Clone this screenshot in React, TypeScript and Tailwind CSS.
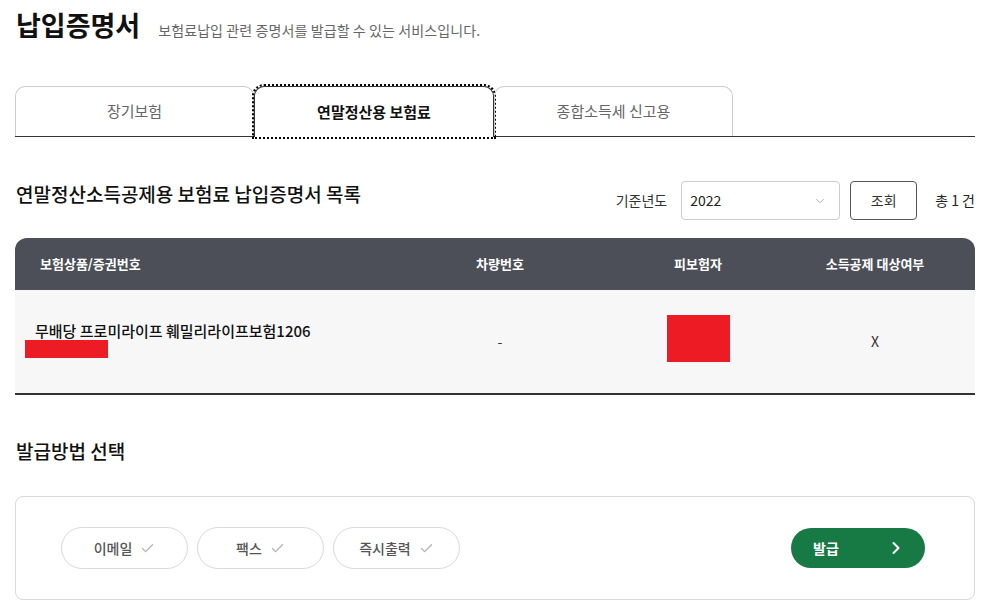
import { Check, ChevronDown, ChevronRight } from "lucide-react";

const tabs = ["장기보험", "연말정산용 보험료", "종합소득세 신고용"];
const methods = ["이메일", "팩스", "즉시출력"];

export default function App() {
  return (
    <div
      className="w-[997px] h-[607px] overflow-hidden bg-white text-[#111]"
      style={{ fontFamily: '"Noto Sans CJK KR", "Noto Sans", sans-serif' }}
    >
      <div className="pl-[15px] pr-[22px]">
        {/* page title */}
        <div className="flex items-end pt-[4px] h-[44px]">
          <h1 className="text-[27px] font-bold leading-[38px] pl-[1px]">
            납입증명서
          </h1>
          <span className="ml-[18px] mb-[3px] text-[14px] tracking-[0.1px] text-[#666]">
            보험료납입 관련 증명서를 발급할 수 있는 서비스입니다.
          </span>
        </div>

        {/* tabs */}
        <div className="mt-[42px] flex border-b border-[#333] h-[51px]">
          {tabs.map((t, i) =>
            i === 1 ? (
              <div
                key={t}
                className="w-[240px] -mb-px flex items-center justify-center rounded-t-[10px] border border-b-0 border-[#333] bg-white text-[15px] font-bold outline-2 outline-dotted outline-black"
              >
                {t}
              </div>
            ) : (
              <div
                key={t}
                className="w-[239px] flex items-center justify-center rounded-t-[10px] border border-b-0 border-[#ccc] text-[15px] text-[#666]"
              >
                {t}
              </div>
            )
          )}
        </div>

        {/* list header */}
        <div className="mt-[44px] flex items-center h-[39px]">
          <h2 className="pl-[1px] text-[19px] font-medium -mt-[12px]">
            연말정산소득공제용 보험료 납입증명서 목록
          </h2>
          <div className="ml-auto flex items-center">
            <span className="text-[14px] text-[#333] mr-[14px]">기준년도</span>
            <div className="w-[159px] h-[39px] rounded-[4px] border border-[#ccc] flex items-center pl-[8px] pr-[12px] text-[14px] text-[#222]">
              2022
              <ChevronDown className="ml-auto text-[#aaa]" size={14} strokeWidth={1.5} />
            </div>
            <button className="ml-[10px] w-[67px] h-[39px] rounded-[4px] border border-[#555] text-[14px] text-[#333]">
              조회
            </button>
            <span className="ml-[18px] text-[14px] text-[#222]">총 1 건</span>
          </div>
        </div>

        {/* table */}
        <div className="mt-[18px]">
          <div className="grid grid-cols-[385px_200px_196px_158px] h-[52px] items-center rounded-t-[12px] bg-[#4c4f57] text-white text-[13px] font-bold">
            <div className="pl-[25px]">보험상품/증권번호</div>
            <div className="text-center">차량번호</div>
            <div className="text-center">피보험자</div>
            <div className="text-center">소득공제 대상여부</div>
          </div>
          <div className="grid grid-cols-[385px_200px_196px_158px] h-[105px] items-center bg-[#f7f7f7] border-b-2 border-[#333]">
            <div className="pl-[10px] -mt-[4px]">
              <div className="pl-[10px] text-[15px] font-medium leading-[20px]">
                무배당 프로미라이프 훼밀리라이프보험1206
              </div>
              <div className="-mt-[1px] w-[83px] h-[18px] bg-[#ed1c24]" />
            </div>
            <div className="text-center text-[14px] text-[#333]">-</div>
            <div className="flex justify-center -mt-[7px]">
              <div className="w-[63px] h-[47px] bg-[#ed1c24]" />
            </div>
            <div className="text-center text-[14px] text-[#333]">X</div>
          </div>
        </div>

        {/* issue method */}
        <h2 className="mt-[41px] pl-[1px] text-[19px] font-medium leading-[30px]">
          발급방법 선택
        </h2>
        <div className="mt-[30px] h-[104px] rounded-[8px] border border-[#d9d9d9] flex items-center pl-[45px] pr-[49px]">
          <div className="flex gap-[9px]">
            {methods.map((m) => (
              <button
                key={m}
                className="w-[127px] h-[42px] rounded-full border border-[#d9d9d9] flex items-center justify-center gap-[8px] text-[14px] font-medium text-[#555]"
              >
                {m}
                <Check size={15} strokeWidth={2.2} className="text-[#b5b5b5]" />
              </button>
            ))}
          </div>
          <button className="ml-auto w-[134px] h-[40px] rounded-full bg-[#177a45] text-white flex items-center pl-[22px] pr-[19px] text-[14px] font-bold">
            발급
            <ChevronRight size={20} strokeWidth={2.4} className="ml-auto" />
          </button>
        </div>
      </div>
    </div>
  );
}
